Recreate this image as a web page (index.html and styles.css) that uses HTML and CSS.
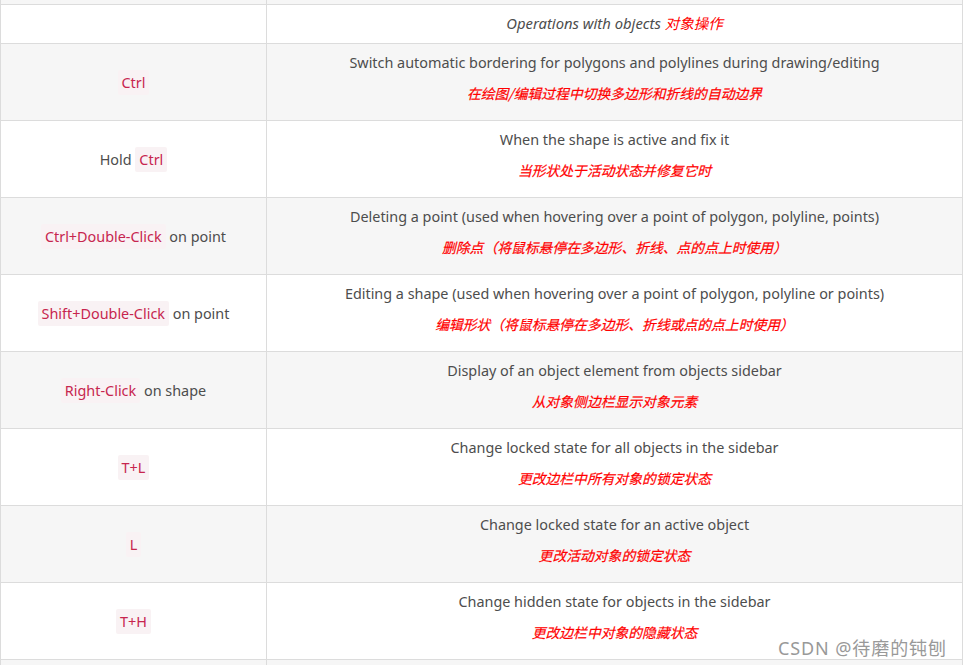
FILE: index.html
```html
<!DOCTYPE html>
<html>
<head>
<meta charset="utf-8">
<link rel="stylesheet" href="styles.css">
</head>
<body>
<table class="tbl">
  <colgroup><col class="c1"><col class="c2"></colgroup>
  <tr class="filler gray"><td></td><td></td></tr>
  <tr class="head"><td></td><td><em>Operations with objects <span class="red">对象操作</span></em></td></tr>
  <tr class="gray"><td class="key"><code>Ctrl</code></td><td class="desc"><p>Switch automatic bordering for polygons and polylines during drawing/editing</p><p class="cn">在绘图/编辑过程中切换多边形和折线的自动边界</p></td></tr>
  <tr><td class="key">Hold <code>Ctrl</code></td><td class="desc"><p>When the shape is active and fix it</p><p class="cn">当形状处于活动状态并修复它时</p></td></tr>
  <tr class="gray"><td class="key"><code>Ctrl+Double-Click</code> on point</td><td class="desc"><p>Deleting a point (used when hovering over a point of polygon, polyline, points)</p><p class="cn">删除点（将鼠标悬停在多边形、折线、点的点上时使用）</p></td></tr>
  <tr><td class="key"><code>Shift+Double-Click</code> on point</td><td class="desc"><p>Editing a shape (used when hovering over a point of polygon, polyline or points)</p><p class="cn">编辑形状（将鼠标悬停在多边形、折线或点的点上时使用）</p></td></tr>
  <tr class="gray"><td class="key"><code>Right-Click</code> on shape</td><td class="desc"><p>Display of an object element from objects sidebar</p><p class="cn">从对象侧边栏显示对象元素</p></td></tr>
  <tr><td class="key"><code>T+L</code></td><td class="desc"><p>Change locked state for all objects in the sidebar</p><p class="cn">更改边栏中所有对象的锁定状态</p></td></tr>
  <tr class="gray"><td class="key"><code>L</code></td><td class="desc"><p>Change locked state for an active object</p><p class="cn">更改活动对象的锁定状态</p></td></tr>
  <tr><td class="key"><code>T+H</code></td><td class="desc"><p>Change hidden state for objects in the sidebar</p><p class="cn">更改边栏中对象的隐藏状态</p></td></tr>
  <tr class="gray"><td></td><td></td></tr>
</table>
<div class="mark">CSDN @待磨的钝刨</div>
</body>
</html>
```
FILE: styles.css
```css
html, body { margin: 0; padding: 0; background: #fff; }
body {
  font-family: "Noto Sans", "Noto Sans CJK SC", sans-serif;
  font-size: 14.4px;
  color: #4d4d4d;
  width: 963px;
  height: 665px;
  overflow: hidden;
  position: relative;
}
.tbl {
  border-collapse: collapse;
  width: 963px;
  table-layout: fixed;
  margin-top: -1px;
}
.c1 { width: 266px; }
.tbl td {
  border: 1px solid #dcdcdc;
  text-align: center;
  padding: 0 10px;
}
.tbl tr { height: 77px; }
.tbl tr.filler { height: 5px; }
.tbl tr.head { height: 39px; }
.gray td { background: #f6f6f6; }
.head td { line-height: 20px; padding-bottom: 2px; font-size: 14.8px; }
.red { color: #f00; font-family: "Noto Sans CJK SC", sans-serif; font-size: 14.5px; }
.tbl td.key { vertical-align: middle; }
.tbl td.desc { vertical-align: top; padding: 7px 10px 14px; }
.desc p { margin: 0; line-height: 24px; }
.desc p.cn {
  margin-top: 6px;
  color: #f00;
  font-style: italic;
  font-size: 13.8px;
  font-family: "Noto Sans CJK SC", sans-serif;
  -webkit-text-stroke: 0.2px #f00;
}
code {
  font-family: "Noto Sans", "Noto Sans CJK SC", sans-serif;
  font-size: 14.4px;
  color: #c7254e;
  background: #f9f2f4;
  border-radius: 2px;
  padding: 3px 4px;
}
.mark {
  position: absolute;
  left: 778px;
  top: 634px;
  font-family: "Noto Sans", "Noto Sans CJK SC", sans-serif;
  font-size: 18px;
  color: #999;
  letter-spacing: 0.9px;
}
```
